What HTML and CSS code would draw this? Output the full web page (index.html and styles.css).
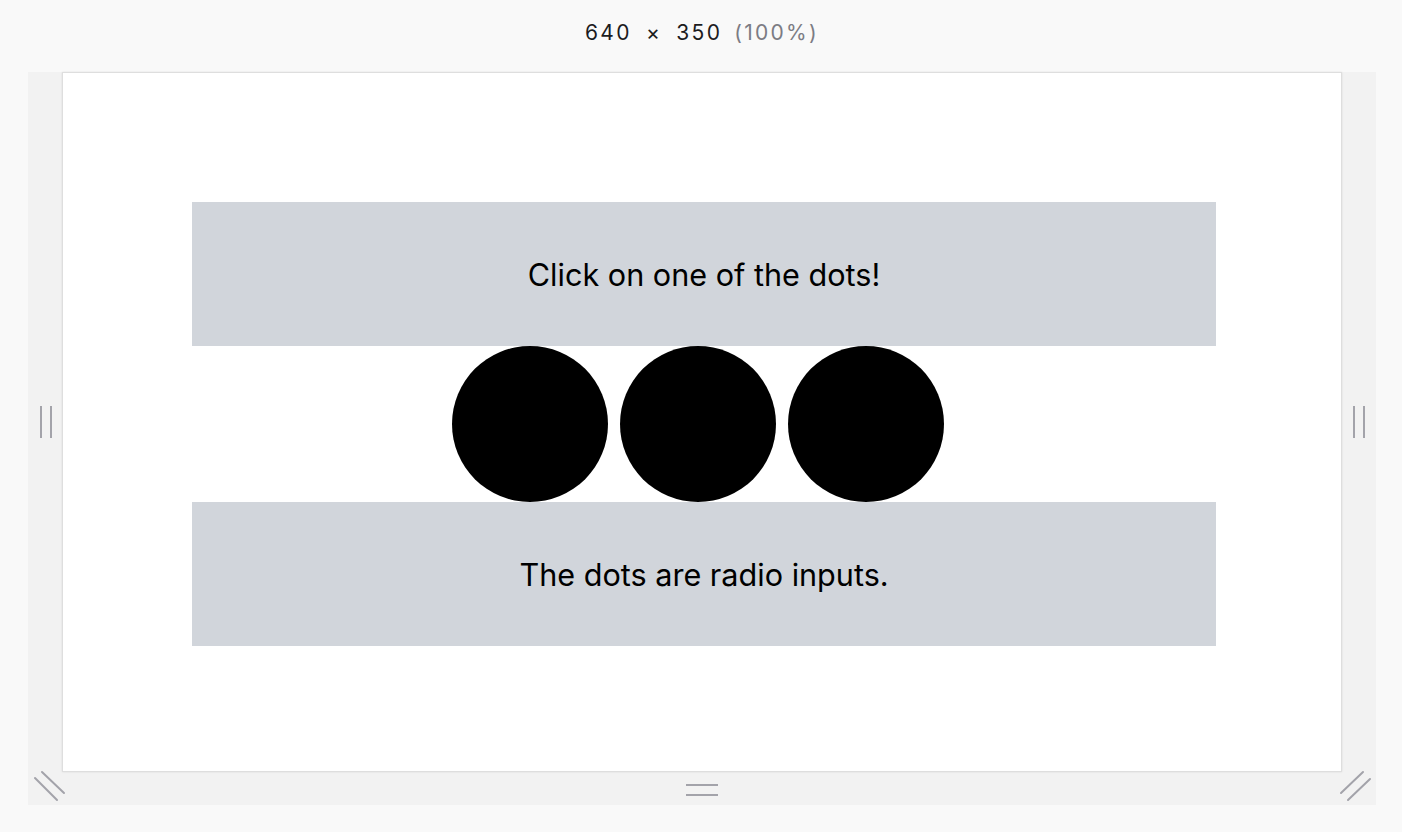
FILE: index.html
```html
<!DOCTYPE html>
<html lang="en">
<head>
<meta charset="utf-8">
<title>Radio dots</title>
<link rel="stylesheet" href="styles.css">
</head>
<body>
<header class="topbar">
  <span class="size">640 × 350</span>
  <span class="zoom">(100%)</span>
</header>
<div class="stage">
  <div class="frame">
    <div class="content">
      <div class="panel">Click on one of the dots!</div>
      <div class="dots">
        <input class="dot" type="radio" name="dot" aria-label="Dot 1">
        <input class="dot" type="radio" name="dot" aria-label="Dot 2">
        <input class="dot" type="radio" name="dot" aria-label="Dot 3">
      </div>
      <div class="panel">The dots are radio inputs.</div>
    </div>
  </div>
  <div class="side-handle side-left"><span></span><span></span></div>
  <div class="side-handle side-right"><span></span><span></span></div>
  <div class="corner corner-left">
    <svg width="34" height="33" viewBox="0 0 34 33" overflow="visible">
      <line x1="7" y1="6" x2="29" y2="28"/>
      <line x1="14" y1="0" x2="36" y2="21"/>
    </svg>
  </div>
  <div class="bottom-handle"><span></span><span></span></div>
  <div class="corner corner-right">
    <svg width="34" height="33" viewBox="0 0 34 33" overflow="visible">
      <line x1="-1" y1="21" x2="21" y2="0"/>
      <line x1="6" y1="28" x2="28" y2="7"/>
    </svg>
  </div>
</div>
</body>
</html>
```
FILE: styles.css
```css
html, body {
  margin: 0;
  padding: 0;
}

body {
  background: #f9f9f9;
  font-family: Inter, "Liberation Sans", Arial, sans-serif;
  width: 1402px;
  height: 832px;
  overflow: hidden;
}

.topbar {
  height: 72px;
  display: flex;
  align-items: center;
  justify-content: center;
  gap: 12px;
  font-size: 21px;
  letter-spacing: 2.3px;
  padding-bottom: 8px;
  padding-left: 2px;
  box-sizing: border-box;
}

.size {
  color: #1c1c1e;
  word-spacing: 6px;
}

.zoom {
  color: #7c7c84;
}

.stage {
  margin: 0 26px 0 28px;
  background: #f2f2f2;
  height: 733px;
  display: grid;
  grid-template-columns: 34px 1280px 34px;
  grid-template-rows: 700px 33px;
}

.frame {
  grid-column: 2;
  grid-row: 1;
  background: #ffffff;
  border: 1px solid #dedede;
  box-shadow: 0 0 2px rgba(0, 0, 0, 0.1);
  overflow: hidden;
}

.content {
  padding: 129px 0 0 129px;
  width: 1024px;
}

.panel {
  height: 144px;
  background: #d1d5db;
  display: flex;
  align-items: center;
  justify-content: center;
  font-family: Inter, "Liberation Sans", Arial, sans-serif;
  font-size: 30.6px;
  color: #000000;
}

.dots {
  display: flex;
  gap: 12px;
  padding-left: 260px;
  height: 156px;
}

.dot {
  appearance: none;
  -webkit-appearance: none;
  margin: 0;
  width: 156px;
  height: 156px;
  border-radius: 50%;
  background: #000000;
  border: none;
  cursor: pointer;
}

.side-handle {
  grid-row: 1;
  display: flex;
  align-items: center;
  justify-content: center;
  gap: 8px;
}

.side-left {
  grid-column: 1;
  padding-left: 2px;
}

.side-right {
  grid-column: 3;
  padding-right: 1px;
}

.side-handle span {
  width: 2px;
  height: 32px;
  background: #a3a3aa;
}

.bottom-handle {
  grid-column: 2;
  grid-row: 2;
  display: flex;
  flex-direction: column;
  align-items: center;
  gap: 8px;
  padding-top: 12px;
}

.bottom-handle span {
  width: 32px;
  height: 2px;
  background: #a3a3aa;
}

.corner {
  grid-row: 2;
}

.corner-left {
  grid-column: 1;
}

.corner-right {
  grid-column: 3;
}

.corner svg {
  display: block;
  overflow: visible;
}

.corner line {
  stroke: #a3a3aa;
  stroke-width: 2;
  stroke-linecap: round;
}
```
